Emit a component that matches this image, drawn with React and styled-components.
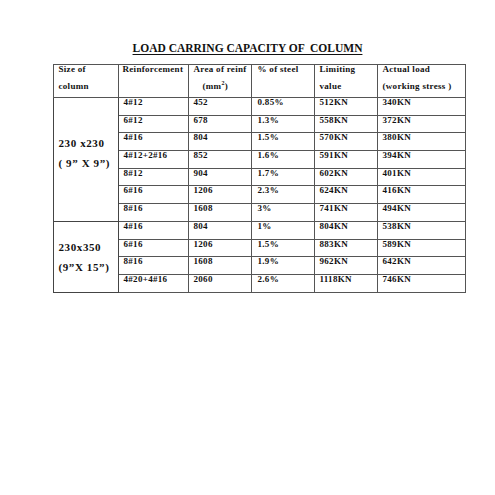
import React from "react";
import styled, { createGlobalStyle } from "styled-components";

const GlobalStyle = createGlobalStyle`
  html, body {
    margin: 0;
    padding: 0;
    background: #ffffff;
  }
  body {
    font-family: "Liberation Serif", "Times New Roman", serif;
    color: #111;
  }
`;

const Page = styled.div`
  width: 495px;
  height: 495px;
  padding-top: 42px;
  box-sizing: border-box;
  display: flex;
  flex-direction: column;
  align-items: center;
`;

const Title = styled.h1`
  margin: 0;
  font-size: 11.5px;
  line-height: 13px;
  font-weight: bold;
  text-decoration: underline;
  text-underline-offset: 2px;
  white-space: pre;
`;

const Table = styled.table`
  margin-top: 9px;
  margin-left: 23px;
  width: 412px;
  table-layout: fixed;
  border-collapse: collapse;
  border: 1.5px solid #444;
  font-size: 9px;
  font-weight: bold;
  letter-spacing: 0.3px;
`;

const HeadRow = styled.tr`
  height: 33px;
`;

const Row = styled.tr`
  height: 17.7px;
`;

const Cell = styled.td`
  border: 1.5px solid #555;
  padding: 0 0 0 ${(p) => p.$pad || 5}px;
  vertical-align: top;
  line-height: 9px;
  white-space: nowrap;
`;

const HeadLine = styled.div`
  line-height: 9px;
  padding-left: ${(p) => p.$indent || 0}px;
  & + & {
    margin-top: 8px;
  }
`;

const SizeCell = styled.td`
  border: 1.5px solid #444;
  padding: 0 0 ${(p) => p.$lift || 0}px 5px;
  vertical-align: middle;
  font-size: 11px;
  letter-spacing: 0.6px;
  line-height: 20px;
  white-space: pre;
`;

const Sup = styled.sup`
  font-size: 6px;
  line-height: 0;
`;

const groups = [
  {
    size: ["230 x230", "( 9\u201d X 9\u201d)"],
    lift: 12,
    rows: [
      ["4#12", "452", "0.85%", "512KN", "340KN"],
      ["6#12", "678", "1.3%", "558KN", "372KN"],
      ["4#16", "804", "1.5%", "570KN", "380KN"],
      ["4#12+2#16", "852", "1.6%", "591KN", "394KN"],
      ["8#12", "904", "1.7%", "602KN", "401KN"],
      ["6#16", "1206", "2.3%", "624KN", "416KN"],
      ["8#16", "1608", "3%", "741KN", "494KN"],
    ],
  },
  {
    size: ["230x350", "(9\u201dX 15\u201d)"],
    lift: 0,
    rows: [
      ["4#16", "804", "1%", "804KN", "538KN"],
      ["6#16", "1206", "1.5%", "883KN", "589KN"],
      ["8#16", "1608", "1.9%", "962KN", "642KN"],
      ["4#20+4#16", "2060", "2.6%", "1118KN", "746KN"],
    ],
  },
];

export default function App() {
  return (
    <>
      <GlobalStyle />
      <Page>
        <Title>{"LOAD CARRING CAPACITY OF  COLUMN"}</Title>
        <Table>
          <colgroup>
            <col style={{ width: 65 }} />
            <col style={{ width: 70 }} />
            <col style={{ width: 63 }} />
            <col style={{ width: 63 }} />
            <col style={{ width: 63 }} />
            <col style={{ width: 88 }} />
          </colgroup>
          <tbody>
            <HeadRow>
              <Cell>
                <HeadLine>Size of</HeadLine>
                <HeadLine>column</HeadLine>
              </Cell>
              <Cell $pad={4}>
                <HeadLine>Reinforcement</HeadLine>
              </Cell>
              <Cell>
                <HeadLine>Area of reinf</HeadLine>
                <HeadLine $indent={9}>
                  (mm<Sup>2</Sup>)
                </HeadLine>
              </Cell>
              <Cell $pad={6}>
                <HeadLine>% of steel</HeadLine>
              </Cell>
              <Cell>
                <HeadLine>Limiting</HeadLine>
                <HeadLine>value</HeadLine>
              </Cell>
              <Cell>
                <HeadLine>Actual load</HeadLine>
                <HeadLine>{"(working  stress )"}</HeadLine>
              </Cell>
            </HeadRow>
            {groups.map((g) =>
              g.rows.map((r, i) => (
                <Row key={g.size[0] + i}>
                  {i === 0 && (
                    <SizeCell rowSpan={g.rows.length} $lift={g.lift}>
                      {g.size.join("\n")}
                    </SizeCell>
                  )}
                  {r.map((v, j) => (
                    <Cell key={j} $pad={j === 2 ? 6 : 5}>
                      {v}
                    </Cell>
                  ))}
                </Row>
              ))
            )}
          </tbody>
        </Table>
      </Page>
    </>
  );
}
